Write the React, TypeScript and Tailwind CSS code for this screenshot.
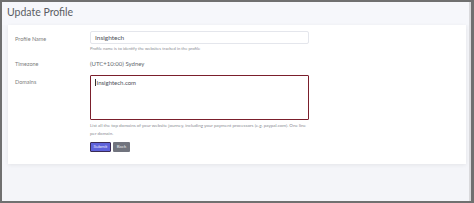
export default function App() {
    return (
        <div className="w-[474px] h-[203px] bg-[#707070] pt-[2px] pb-[2px] pl-[2px] pr-[3px] flex" style={{ fontFamily: 'Lato, "Noto Sans", sans-serif' }}>
            <div className="flex-1 bg-[#f4f5f9] flex flex-col">
                <div className="h-[23px] flex items-center pl-[5px] pb-[2px] bg-[#f6f7fb]">
                    <h1 className="text-[10.5px] leading-none text-[#5a5d64]">Update Profile</h1>
                </div>
                <div className="ml-[6px] mr-[3px] bg-white shadow-[0_1px_4px_rgba(0,0,0,0.07)] pt-[6px] pb-[12px] pl-[7px]">
                    <div className="flex">
                        <div className="w-[75px] text-[5.5px] text-[#808080] pt-[4px]">Profile Name</div>
                        <div className="w-[219px]">
                            <div className="h-[13px] border border-[#e4e6ec] rounded-[2px] flex items-center pl-[4px] text-[6.5px] text-[#4d5058]">Insightech</div>
                            <div className="text-[4.2px] text-[#8a8d94] mt-[3px] leading-none">Profile name is to identify the websites tracked in the profile</div>
                        </div>
                    </div>
                    <div className="flex mt-[8px] items-center">
                        <div className="w-[75px] text-[5.5px] text-[#808080]">Timezone</div>
                        <div className="text-[6px] text-[#64676e]">(UTC+10:00) Sydney</div>
                    </div>
                    <div className="flex mt-[7px]">
                        <div className="w-[75px] text-[5.5px] text-[#808080] pt-[3px]">Domains</div>
                        <div className="w-[219px]">
                            <div className="h-[45px] border-[1.5px] border-[#7b1f2c] rounded-[1px] pl-[4px] pt-[2px] text-[6px] text-[#4d5058]">
                                <span className="border-l border-[#333] pl-[0.5px]">Insightech.com</span>
                            </div>
                            <div className="text-[4.5px] text-[#8a8d94] mt-[2px] leading-[8px]">
                                List all the top domains of your website journey, including your payment processors (e.g. paypal.com). One line per domain.
                            </div>
                            <div className="flex gap-[2px] mt-[4px]">
                                <button className="h-[10px] w-[21px] bg-[#5e62da] border border-[#3a2a55] rounded-[1px] text-[4.5px] text-[#e8e9ff]">Submit</button>
                                <button className="h-[10px] w-[17px] bg-[#71747e] rounded-[1px] text-[4.5px] text-[#e4e5ea]">Back</button>
                            </div>
                        </div>
                    </div>
                </div>
            </div>
            <div className="w-[2px] bg-[#d9d9dc]" />
        </div>
    );
}
